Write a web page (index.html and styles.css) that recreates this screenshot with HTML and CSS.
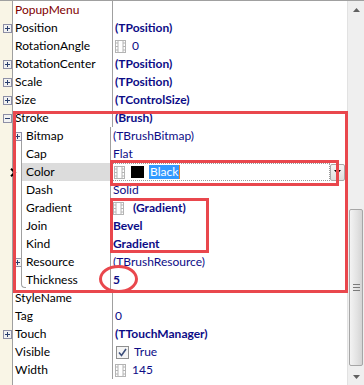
FILE: index.html
```html
<!DOCTYPE html>
<html lang="en">
	<head>
		<meta charset="UTF-8" />
		<meta name="viewport" content="width=device-width, initial-scale=1.0" />
		<title>Object Inspector</title>
		<link rel="stylesheet" href="styles.css">
	</head>
	<body>
		<div class="inspector">
			<div class="props">
				<div class="row"><div class="gut"></div><div class="name event">PopupMenu</div><div class="val"></div></div>
				<div class="row"><div class="gut"><svg class="pm" width="9" height="9" viewBox="0 0 9 9"><rect x="0.5" y="0.5" width="8" height="8" fill="#f2f2f2" stroke="#8e8fa6"/><path d="M2 4.5h5M4.5 2v5" stroke="#2b3f6e"/></svg></div><div class="name">Position</div><div class="val mod">(TPosition)</div></div>
				<div class="row"><div class="gut"></div><div class="name">RotationAngle</div><div class="val"><svg class="film" width="11" height="13" viewBox="0 0 11 13"><rect x="0.5" y="0.5" width="10" height="12" fill="none" stroke="#b4b4b4"/><path d="M3 0.5v12M8 0.5v12M0.5 3h2.5M0.5 6.5h2.5M0.5 10h2.5M8 3h2.5M8 6.5h2.5M8 10h2.5" stroke="#b4b4b4"/></svg>0</div></div>
				<div class="row"><div class="gut"><svg class="pm" width="9" height="9" viewBox="0 0 9 9"><rect x="0.5" y="0.5" width="8" height="8" fill="#f2f2f2" stroke="#8e8fa6"/><path d="M2 4.5h5M4.5 2v5" stroke="#2b3f6e"/></svg></div><div class="name">RotationCenter</div><div class="val mod">(TPosition)</div></div>
				<div class="row"><div class="gut"><svg class="pm" width="9" height="9" viewBox="0 0 9 9"><rect x="0.5" y="0.5" width="8" height="8" fill="#f2f2f2" stroke="#8e8fa6"/><path d="M2 4.5h5M4.5 2v5" stroke="#2b3f6e"/></svg></div><div class="name">Scale</div><div class="val mod">(TPosition)</div></div>
				<div class="row"><div class="gut"><svg class="pm" width="9" height="9" viewBox="0 0 9 9"><rect x="0.5" y="0.5" width="8" height="8" fill="#f2f2f2" stroke="#8e8fa6"/><path d="M2 4.5h5M4.5 2v5" stroke="#2b3f6e"/></svg></div><div class="name">Size</div><div class="val mod">(TControlSize)</div></div>
				<div class="row"><div class="gut"><svg class="pm" width="9" height="9" viewBox="0 0 9 9"><rect x="0.5" y="0.5" width="8" height="8" fill="#f2f2f2" stroke="#8e8fa6"/><path d="M2 4.5h5" stroke="#2b3f6e"/></svg></div><div class="name">Stroke</div><div class="val mod">(Brush)</div></div>

				<div class="row sub"><div class="gut"></div><div class="name"><span class="twig"><svg class="pm" width="9" height="9" viewBox="0 0 9 9"><rect x="0.5" y="0.5" width="8" height="8" fill="#f2f2f2" stroke="#8e8fa6"/><path d="M2 4.5h5M4.5 2v5" stroke="#2b3f6e"/></svg></span><span class="label">Bitmap</span></div><div class="val">(TBrushBitmap)</div></div>
				<div class="row sub"><div class="gut"></div><div class="name"><span class="twig"></span><span class="label">Cap</span></div><div class="val">Flat</div></div>
				<div class="row sub"><div class="gut"><svg class="cursor" width="7" height="9" viewBox="0 0 7 9"><path d="M1 0.8l4 3.7-4 3.7" fill="none" stroke="#000" stroke-width="2"/></svg></div><div class="name"><span class="twig"></span><span class="label selected">Color</span></div>
					<div class="val edit">
						<div class="editbox">
							<svg class="film" width="11" height="13" viewBox="0 0 11 13"><rect x="0.5" y="0.5" width="10" height="12" fill="none" stroke="#b4b4b4"/><path d="M3 0.5v12M8 0.5v12M0.5 3h2.5M0.5 6.5h2.5M0.5 10h2.5M8 3h2.5M8 6.5h2.5M8 10h2.5" stroke="#b4b4b4"/></svg>
							<span class="swatch"></span>
							<span class="sel">Black</span>
						</div>
						<div class="dd"><svg width="7" height="4" viewBox="0 0 7 4"><path d="M0 0h7L3.5 4z" fill="#000"/></svg></div>
					</div>
				</div>
				<div class="row sub"><div class="gut"></div><div class="name"><span class="twig"></span><span class="label">Dash</span></div><div class="val">Solid</div></div>
				<div class="row sub"><div class="gut"></div><div class="name"><span class="twig"></span><span class="label">Gradient</span></div><div class="val mod"><svg class="film" width="11" height="13" viewBox="0 0 11 13"><rect x="0.5" y="0.5" width="10" height="12" fill="none" stroke="#b4b4b4"/><path d="M3 0.5v12M8 0.5v12M0.5 3h2.5M0.5 6.5h2.5M0.5 10h2.5M8 3h2.5M8 6.5h2.5M8 10h2.5" stroke="#b4b4b4"/></svg>&nbsp;(Gradient)</div></div>
				<div class="row sub"><div class="gut"></div><div class="name"><span class="twig"></span><span class="label">Join</span></div><div class="val mod">Bevel</div></div>
				<div class="row sub"><div class="gut"></div><div class="name"><span class="twig"></span><span class="label">Kind</span></div><div class="val mod">Gradient</div></div>
				<div class="row sub"><div class="gut"></div><div class="name"><span class="twig"><svg class="pm" width="9" height="9" viewBox="0 0 9 9"><rect x="0.5" y="0.5" width="8" height="8" fill="#f2f2f2" stroke="#8e8fa6"/><path d="M2 4.5h5M4.5 2v5" stroke="#2b3f6e"/></svg></span><span class="label">Resource</span></div><div class="val">(TBrushResource)</div></div>
				<div class="row sub"><div class="gut"></div><div class="name"><span class="twig"></span><span class="label">Thickness</span></div><div class="val mod">5</div></div>

				<div class="row"><div class="gut"></div><div class="name">StyleName</div><div class="val"></div></div>
				<div class="row"><div class="gut"></div><div class="name">Tag</div><div class="val">0</div></div>
				<div class="row"><div class="gut"><svg class="pm" width="9" height="9" viewBox="0 0 9 9"><rect x="0.5" y="0.5" width="8" height="8" fill="#f2f2f2" stroke="#8e8fa6"/><path d="M2 4.5h5M4.5 2v5" stroke="#2b3f6e"/></svg></div><div class="name">Touch</div><div class="val mod">(TTouchManager)</div></div>
				<div class="row"><div class="gut"></div><div class="name">Visible</div><div class="val"><svg class="check" width="13" height="13" viewBox="0 0 13 13"><rect x="0.5" y="0.5" width="12" height="12" fill="#f4f4f4" stroke="#8f8f8f"/><path d="M3 6.5l2.5 3L10 3" fill="none" stroke="#3d4f7a" stroke-width="1.6"/></svg>True</div></div>
				<div class="row"><div class="gut"></div><div class="name">Width</div><div class="val"><svg class="film" width="11" height="13" viewBox="0 0 11 13"><rect x="0.5" y="0.5" width="10" height="12" fill="none" stroke="#b4b4b4"/><path d="M3 0.5v12M8 0.5v12M0.5 3h2.5M0.5 6.5h2.5M0.5 10h2.5M8 3h2.5M8 6.5h2.5M8 10h2.5" stroke="#b4b4b4"/></svg>145</div></div>
				<div class="row filler"><div class="gut"></div></div>
			</div>

			<div class="scroll">
				<div class="arrow"><svg width="7" height="4" viewBox="0 0 7 4"><path d="M3.5 0L7 4H0z" fill="#606060"/></svg></div>
				<div class="track">
					<div class="thumb"><span class="grip"></span></div>
				</div>
				<div class="arrow"><svg width="7" height="4" viewBox="0 0 7 4"><path d="M0 0h7L3.5 4z" fill="#606060"/></svg></div>
			</div>

			<div class="tree"></div>
			<div class="mark big"></div>
			<div class="mark color"></div>
			<div class="mark grad"></div>
			<div class="mark ring"></div>
		</div>
	</body>
</html>
```

FILE: styles.css
```css
body {
	margin: 0;
	font-family: Lato, "Liberation Sans", sans-serif;
	font-size: 12px;
	background-color: #fff;
}
.inspector {
	position: relative;
	display: flex;
	width: 364px;
	height: 385px;
	box-sizing: border-box;
	border-top: 1px solid #a0a0a0;
	overflow: hidden;
}
.props {
	display: flex;
	flex-direction: column;
	width: 348px;
}
.row {
	display: flex;
	height: 18px;
	line-height: 18px;
	flex-shrink: 0;
}
.row.filler {
	flex: 1;
}
.gut {
	width: 13px;
	border-right: 1px solid #a0a0a0;
	background-color: #f9f5e6;
	display: flex;
	align-items: center;
	padding-left: 3px;
	box-sizing: border-box;
}
.name {
	width: 97px;
	border-right: 1px solid #a0a0a0;
	padding-left: 2px;
	color: #000;
	white-space: nowrap;
	overflow: hidden;
	display: flex;
	align-items: center;
}
.name.event {
	color: #800000;
}
.sub .name {
	padding-left: 0;
}
.twig {
	width: 9px;
	height: 18px;
	display: flex;
	align-items: center;
	flex-shrink: 0;
}
.label {
	flex: 1;
	padding-left: 4px;
	height: 18px;
}
.label.selected {
	background-color: #dcdcdc;
}
.pm {
	display: block;
}
.cursor {
	display: block;
	margin-left: 7px;
	flex-shrink: 0;
}
.val {
	flex: 1;
	padding-left: 2px;
	color: #0c0c86;
	white-space: nowrap;
	display: flex;
	align-items: center;
}
.val.mod {
	font-weight: bold;
}
.film {
	margin-right: 6px;
	flex-shrink: 0;
}
.check {
	margin-left: 1px;
	margin-right: 5px;
}
.val.edit {
	padding-left: 0;
	padding-right: 2px;
}
.editbox {
	flex: 1;
	height: 18px;
	box-sizing: border-box;
	border: 1px dotted #9a9a9a;
	display: flex;
	align-items: center;
	padding-left: 2px;
}
.swatch {
	width: 13px;
	height: 12px;
	background-color: #000;
	margin-right: 5px;
}
.sel {
	background-color: #3399ff;
	color: #fff;
	line-height: 14px;
	padding: 0 1px;
	border-right: 1px solid #e8862a;
}
.dd {
	width: 15px;
	height: 17px;
	box-sizing: border-box;
	border: 1px solid #a8a8a8;
	border-radius: 2px;
	background: linear-gradient(#f6f6f6, #dedede);
	display: flex;
	align-items: center;
	justify-content: center;
}
.scroll {
	width: 16px;
	background-color: #efefef;
	border-left: 1px solid #e2e2e2;
	display: flex;
	flex-direction: column;
}
.arrow {
	height: 17px;
	display: flex;
	align-items: center;
	justify-content: center;
}
.track {
	flex: 1;
	padding-top: 191px;
}
.thumb {
	height: 157px;
	margin: 0 1px;
	box-sizing: border-box;
	border: 1px solid #a6a6a6;
	border-radius: 2px;
	background: linear-gradient(to right, #f3f3f3, #e2e2e2 60%, #d4d4d4);
	display: flex;
	align-items: center;
	justify-content: center;
}
.grip {
	width: 7px;
	height: 5px;
	border-top: 1px solid #7a7a7a;
	border-bottom: 1px solid #7a7a7a;
	background: linear-gradient(transparent 2px, #7a7a7a 2px, #7a7a7a 3px, transparent 3px);
}
.tree {
	position: absolute;
	left: 21px;
	top: 140px;
	width: 4px;
	height: 146px;
	border-left: 1px solid #a0a0a0;
	border-bottom: 1px solid #a0a0a0;
	border-bottom-left-radius: 4px;
}
.mark {
	position: absolute;
	box-sizing: border-box;
	border: 3px solid #e9474d;
}
.mark.big {
	left: 13px;
	top: 110px;
	width: 335px;
	height: 182px;
}
.mark.color {
	left: 110px;
	top: 159px;
	width: 229px;
	height: 26px;
}
.mark.grad {
	left: 110px;
	top: 197px;
	width: 99px;
	height: 55px;
}
.mark.ring {
	left: 99px;
	top: 264px;
	width: 39px;
	height: 28px;
	border-radius: 50%;
}
```
